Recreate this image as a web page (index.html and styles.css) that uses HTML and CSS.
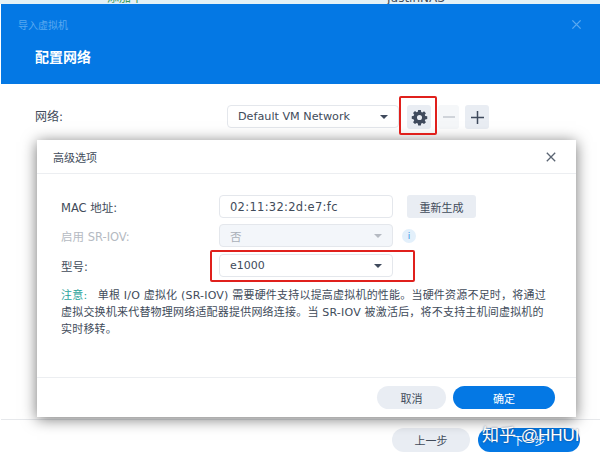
FILE: index.html
```html
<!DOCTYPE html>
<html lang="zh-CN">
<head>
    <meta charset="UTF-8">
    <meta name="viewport" content="width=device-width, initial-scale=1.0">
    <title>导入虚拟机</title>
    <link rel="stylesheet" href="styles.css">
</head>
<body>
    <div class="screen">
        <!-- window behind, only a sliver shows -->
        <div class="behind">
            <span class="behind-left">添加中</span>
            <span class="behind-right">JustinNAS</span>
        </div>

        <div class="wizard">
            <div class="wizard-head">
                <div class="wizard-top">
                    <span class="wizard-name">导入虚拟机</span>
                    <svg class="wizard-close" width="11" height="11" viewBox="0 0 12 12"><path d="M1.5 1.500l9 9M10.500 1.500l-9 9"/></svg>
                </div>
                <h1 class="wizard-title">配置网络</h1>
            </div>
            <div class="wizard-body">
                <label class="net-label">网络:</label>
                <div class="select net-select"><span>Default VM Network</span><i class="caret"></i></div>
                <button class="icon-btn gear-btn">
                    <svg width="17" height="17" viewBox="0 0 18 18"><path fill-rule="evenodd" fill="#3f4a5c" d="M7.600 1h2.800l.4 2.100 1.200.5 1.800-1.200 2 2-1.200 1.800.5 1.200 2.100.4v2.800l-2.100.4-.5 1.200 1.200 1.800-2 2-1.800-1.200-1.200.5-.4 2.100H7.600l-.4-2.100-1.200-.5-1.800 1.200-2-2 1.200-1.800-.5-1.200L.8 10.400V7.600l2.100-.4.5-1.200-1.200-1.800 2-2 1.800 1.200 1.200-.5zM9 6.300a2.700 2.700 0 1 0 0 5.400 2.700 2.700 0 0 0 0-5.400z"/></svg>
                </button>
                <button class="icon-btn minus-btn">
                    <svg width="12" height="12" viewBox="0 0 12 12"><path d="M0 6h12" stroke="#c3c8cf" stroke-width="1.500"/></svg>
                </button>
                <button class="icon-btn plus-btn">
                    <svg width="13" height="13" viewBox="0 0 13 13"><path d="M0 6.500h13M6.500 0v13" stroke="#3f4a5c" stroke-width="1.500"/></svg>
                </button>
            </div>
            <div class="wizard-foot">
                <button class="pill pill-grey prev-btn">上一步</button>
                <button class="pill pill-blue next-btn">下一步</button>
            </div>
        </div>

        <div class="modal">
            <div class="modal-head">
                <span>高级选项</span>
                <svg class="modal-close" width="10" height="10" viewBox="0 0 10 10"><path d="M.8.8l8.400 8.400M9.200.8L.8 9.200"/></svg>
            </div>
            <div class="modal-body">
                <div class="form">
                    <label>MAC 地址:</label>
                    <div class="field">
                        <div class="input mac">02:11:32:2d:e7:fc</div>
                        <button class="regen-btn">重新生成</button>
                    </div>
                    <label class="off">启用 SR-IOV:</label>
                    <div class="field">
                        <div class="select select-off"><span>否</span><i class="caret"></i></div>
                        <span class="info">i</span>
                    </div>
                    <label class="model-label">型号:</label>
                    <div class="field model-field">
                        <div class="select model"><span>e1000</span><i class="caret"></i></div>
                    </div>
                </div>
                <p class="note"><span class="note-tag">注意:</span>&nbsp; 单根 I/O 虚拟化 (SR-IOV) 需要硬件支持以提高虚拟机的性能。当硬件资源不足时，将通过<br>虚拟交换机来代替物理网络适配器提供网络连接。当 SR-IOV 被激活后，将不支持主机间虚拟机的<br>实时移转。</p>
            </div>
            <div class="modal-foot">
                <button class="pill pill-grey cancel-btn">取消</button>
                <button class="pill pill-blue ok-btn">确定</button>
            </div>
        </div>

        <!-- red marks drawn on the screenshot -->
        <div class="mark mark-gear"></div>
        <div class="mark mark-model"></div>

        <div class="watermark">知乎 @HHUI</div>
    </div>
</body>
</html>
```

FILE: styles.css
```css
* {
    box-sizing: border-box;
}
body {
    margin: 0;
    background: #fff;
    font-family: "DejaVu Sans", "Noto Sans CJK SC", sans-serif;
    font-size: 12px;
    color: #414b5a;
}
button {
    font-family: inherit;
    font-size: 11px;
    border: none;
    padding: 0;
    color: inherit;
}
.screen {
    position: relative;
    width: 600px;
    height: 460px;
    overflow: hidden;
}

/* window behind */
.behind {
    height: 4px;
    background: #e4f1f6;
    position: relative;
    overflow: hidden;
    font-size: 12px;
    line-height: 12px;
}
.behind-left {
    position: absolute;
    left: 107px;
    top: -8px;
    color: #3a9a5c;
}
.behind-right {
    position: absolute;
    left: 387px;
    top: -8px;
}

/* wizard */
.wizard {
    margin-left: 1px;
    height: 456px;
    display: flex;
    flex-direction: column;
}
.wizard-head {
    height: 80px;
    background: #0478e4;
    color: #fff;
}
.wizard-top {
    display: flex;
    justify-content: space-between;
    align-items: center;
    padding: 10px 18px 0 17px;
    height: 30px;
}
.wizard-name {
    font-size: 10px;
    color: #5aa9f0;
}
.wizard-close {
    stroke: #5aa9f0;
    stroke-width: 1.5;
    fill: none;
}
.wizard-title {
    margin: 13px 0 0 34px;
    font-size: 14px;
    line-height: 20px;
    font-weight: 700;
}
.wizard-body {
    height: 336px;
    padding: 21px 0 0 34px;
    display: flex;
    align-items: flex-start;
    border-bottom: 1px solid #e6e8eb;
}
.net-label {
    width: 192px;
    line-height: 24px;
}
.net-select {
    width: 172px;
    padding-left: 9px;
    font-size: 11.2px;
}
.icon-btn {
    width: 24px;
    height: 24px;
    border-radius: 3px;
    background: #e9edf3;
    display: flex;
    align-items: center;
    justify-content: center;
}
.gear-btn {
    margin-left: 8px;
}
.minus-btn {
    margin-left: 7px;
    width: 21px;
    background: #f5f7f9;
}
.plus-btn {
    margin-left: 6px;
}
.wizard-foot {
    flex: 1;
    display: flex;
    justify-content: flex-end;
    gap: 8px;
    padding: 8px 20px 0 0;
}
.wizard-foot .pill {
    height: 24px;
}
.prev-btn {
    width: 78px;
}
.next-btn {
    width: 102px;
}

/* form parts */
.select,
.input {
    height: 23px;
    border: 1px solid #e4e7ec;
    border-radius: 4px;
    background: #fff;
    padding: 0 10px;
    display: flex;
    align-items: center;
    justify-content: space-between;
}
.mac {
    font-size: 11.5px;
    letter-spacing: 0.3px;
}
.model {
    font-size: 11px;
}
.caret {
    width: 0;
    height: 0;
    border-left: 4px solid transparent;
    border-right: 4px solid transparent;
    border-top: 4px solid #3f4a5c;
}
.pill {
    height: 23px;
    border-radius: 12px;
}
.pill-grey {
    background: #e9edf3;
}
.pill-blue {
    background: #0478e4;
    color: #fff;
}

/* modal */
.modal {
    position: absolute;
    left: 37px;
    top: 140px;
    width: 539px;
    height: 277px;
    background: #fff;
    box-shadow: 0 2px 14px rgba(0, 0, 0, 0.55);
    display: flex;
    flex-direction: column;
}
.modal-head {
    height: 34px;
    padding: 0 20px 0 16px;
    display: flex;
    align-items: center;
    justify-content: space-between;
    border-bottom: 1px solid #eceef1;
    font-size: 11px;
}
.modal-close {
    stroke: #5a6472;
    stroke-width: 1.3;
    fill: none;
}
.modal-body {
    flex: 1;
    padding: 21px 24px 0;
}
.form {
    display: grid;
    grid-template-columns: 158px 1fr;
    row-gap: 6px;
    align-items: center;
    font-size: 11.5px;
}
.form .select,
.form .input {
    width: 174px;
}
.field {
    display: flex;
    align-items: center;
}
.model-label,
.model-field {
    margin-top: 1px;
}
.off {
    color: #b5bac2;
}
.select-off {
    background: #f3f6fa;
    color: #a9afb8;
}
.select-off .caret {
    border-top-color: #b5bac2;
}
.regen-btn {
    margin-left: 14px;
    width: 69px;
    height: 23px;
    border-radius: 3px;
    background: #e9edf3;
}
.info {
    margin-left: 9px;
    width: 14px;
    height: 14px;
    border-radius: 50%;
    background: #e3f0fb;
    color: #3d94e6;
    font-size: 9px;
    line-height: 14px;
    text-align: center;
}
.note {
    margin: 10px 0 0;
    font-size: 11px;
    line-height: 17px;
    letter-spacing: 0.2px;
    white-space: nowrap;
}
.note-tag {
    margin-right: 3px;
    color: #1fa39b;
}
.modal-foot {
    height: 40px;
    padding: 8px 21px 0 0;
    display: flex;
    justify-content: flex-end;
    gap: 7px;
    border-top: 1px solid #eceef1;
}
.cancel-btn {
    width: 69px;
}
.ok-btn {
    width: 102px;
}

/* annotations */
.mark {
    position: absolute;
    border: 2px solid #e0201c;
    border-radius: 2px;
}
.mark-gear {
    left: 399px;
    top: 96px;
    width: 38px;
    height: 39px;
}
.mark-model {
    left: 210px;
    top: 250px;
    width: 205px;
    height: 32px;
}
.watermark {
    position: absolute;
    left: 482px;
    top: 424px;
    font-family: "Liberation Sans", "Noto Sans CJK SC", sans-serif;
    font-size: 17px;
    line-height: 24px;
    color: #fff;
    text-shadow: 0 0 2px rgba(30, 50, 90, 0.8);
    white-space: nowrap;
}
```
